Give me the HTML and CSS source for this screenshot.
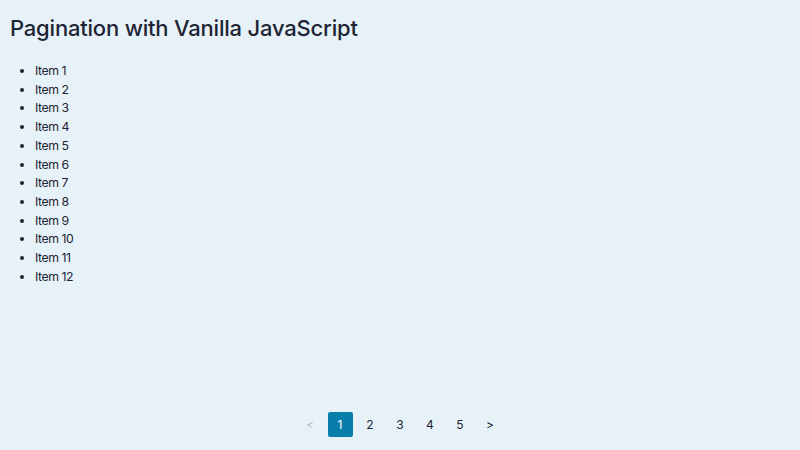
FILE: index.html
```html
<!DOCTYPE html>
<html lang="en">
<head>
<meta charset="utf-8">
<title>Pagination with Vanilla JavaScript</title>
<link rel="stylesheet" href="styles.css">
</head>
<body>
<div class="page">
  <h1 class="title">Pagination with Vanilla JavaScript</h1>
  <ul class="items">
    <li>Item 1</li>
    <li>Item 2</li>
    <li>Item 3</li>
    <li>Item 4</li>
    <li>Item 5</li>
    <li>Item 6</li>
    <li>Item 7</li>
    <li>Item 8</li>
    <li>Item 9</li>
    <li>Item 10</li>
    <li>Item 11</li>
    <li>Item 12</li>
  </ul>
  <nav class="pagination">
    <button class="pg disabled">&lt;</button>
    <button class="pg active">1</button>
    <button class="pg">2</button>
    <button class="pg">3</button>
    <button class="pg">4</button>
    <button class="pg">5</button>
    <button class="pg">&gt;</button>
  </nav>
</div>
</body>
</html>
```

FILE: styles.css
```css
html, body {
  margin: 0;
  padding: 0;
  background: #e6f2f8;
}
body {
  font-family: Inter, "Noto Sans", sans-serif;
  color: #1e2433;
}
.page {
  box-sizing: border-box;
  min-height: 100vh;
  padding: 10px;
  display: flex;
  flex-direction: column;
}
.title {
  margin: 3px 0 0;
  font-size: 22px;
  font-weight: 500;
  line-height: 30px;
  letter-spacing: -0.2px;
}
.items {
  margin: 19px 0 0;
  padding-left: 25px;
  font-size: 12.3px;
  line-height: 18.7px;
  letter-spacing: -0.45px;
}
.pagination {
  margin-top: auto;
  margin-bottom: 3px;
  display: flex;
  justify-content: center;
  gap: 5px;
}
.pg {
  width: 25px;
  height: 25px;
  padding: 0;
  border: none;
  border-radius: 2px;
  background: transparent;
  font-family: Inter, "Noto Sans", sans-serif;
  font-size: 12px;
  color: #1e2433;
}
.pg.active {
  background: #0a7eaa;
  color: #ffffff;
}
.pg.disabled {
  color: #b9c3cc;
}
```
